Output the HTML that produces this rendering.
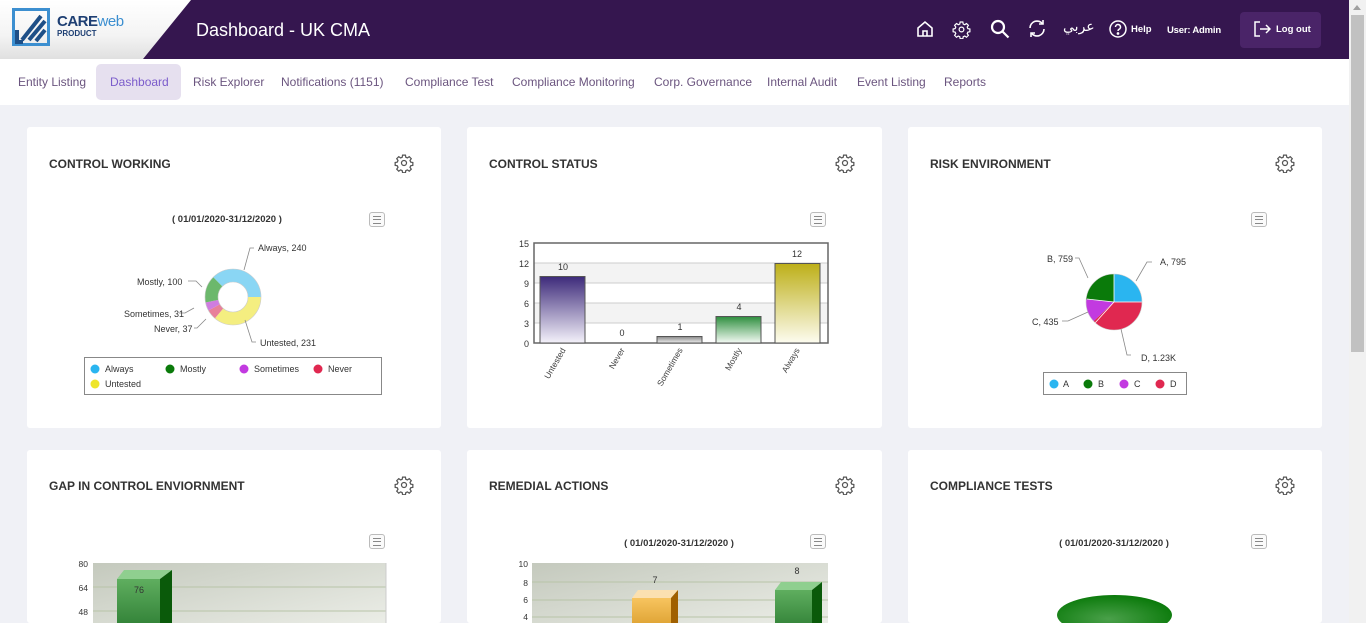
<!DOCTYPE html>
<html style="height:623px;overflow:hidden"><head><meta charset="utf-8">
<style>
*{margin:0;padding:0;box-sizing:border-box}
body{width:1366px;height:623px;overflow:hidden;background:#f0f1f6;font-family:"Liberation Sans","Noto Sans CJK SC",sans-serif;position:relative}
.a{position:absolute}
#hdr{left:0;top:0;width:1349px;height:59px;background:#35164f}
#logo{left:0;top:0;width:200px;height:59px;background:linear-gradient(180deg,#fff 0%,#f4f4f4 60%,#e0e0e0 100%);clip-path:polygon(0 0,191px 0,143px 59px,0 59px)}
#nav{left:0;top:59px;width:1349px;height:46px;background:#fff}
.nv{top:75px;font-size:12px;color:#6b557f}
.card{background:#fff;border-radius:3px}
.ct{font-size:12px;font-weight:bold;color:#333}
.gear{width:20px;height:20px;color:#555}
.menu{width:16px;height:15px;border:1px solid #bbb;border-radius:3px;background:#fafafa}
.menu:after{content:"";position:absolute;left:3px;top:3px;width:8px;height:6px;border-top:1.5px solid #888;border-bottom:1.5px solid #888}
.menu:before{content:"";position:absolute;left:3px;top:6px;width:8px;border-top:1.5px solid #888}
.dt{font-size:9.5px;font-weight:bold;color:#333}
#sb{left:1349px;top:0;width:17px;height:623px;background:#f1f1f1}
</style></head><body>
<svg width="0" height="0" style="position:absolute"><defs>
<symbol id="g" viewBox="0 0 24 24"><g fill="none" stroke="currentColor" stroke-width="1.5"><circle cx="12" cy="12" r="3"/><path d="M10.3 2.5h3.4l.5 2.6 1.9.8 2.2-1.5 2.4 2.4-1.5 2.2.8 1.9 2.6.5v3.4l-2.6.5-.8 1.9 1.5 2.2-2.4 2.4-2.2-1.5-1.9.8-.5 2.6h-3.4l-.5-2.6-1.9-.8-2.2 1.5-2.4-2.4 1.5-2.2-.8-1.9-2.6-.5v-3.4l2.6-.5.8-1.9-1.5-2.2 2.4-2.4 2.2 1.5 1.9-.8z"/></g></symbol>
<linearGradient id="pu" x1="0" y1="0" x2="0" y2="1"><stop offset="0" stop-color="#3d2a7a"/><stop offset="1" stop-color="#f4f2fa"/></linearGradient>
<linearGradient id="gr" x1="0" y1="0" x2="0" y2="1"><stop offset="0" stop-color="#2f8f3f"/><stop offset="1" stop-color="#f4faf4"/></linearGradient>
<linearGradient id="ye" x1="0" y1="0" x2="0" y2="1"><stop offset="0" stop-color="#bdaf18"/><stop offset="1" stop-color="#fdfcf0"/></linearGradient>
<linearGradient id="gy" x1="0" y1="0" x2="0" y2="1"><stop offset="0" stop-color="#888"/><stop offset="1" stop-color="#eee"/></linearGradient>
<linearGradient id="bg3" x1="0" y1="0" x2="1" y2="1"><stop offset="0" stop-color="#c4c9bd"/><stop offset="1" stop-color="#eef0ea"/></linearGradient>
<linearGradient id="g3" x1="0" y1="0" x2="0" y2="1"><stop offset="0" stop-color="#5fae5f"/><stop offset="1" stop-color="#2f7f35"/></linearGradient>
<linearGradient id="o3" x1="0" y1="0" x2="0" y2="1"><stop offset="0" stop-color="#f7c45f"/><stop offset="1" stop-color="#dca030"/></linearGradient>
<radialGradient id="el" cx=".45" cy=".6" r=".6"><stop offset="0" stop-color="#4aa04a"/><stop offset="1" stop-color="#0b7a0b"/></radialGradient>
</defs></svg>

<div id="hdr" class="a"></div>
<div id="logo" class="a"></div>
<svg class="a" style="left:12px;top:8px" width="38" height="38" viewBox="0 0 38 38"><rect x="1.5" y="1.5" width="35" height="35" fill="none" stroke="#3c8fd0" stroke-width="3"/><path d="M5 22v12h6" fill="none" stroke="#1e4f87" stroke-width="4"/><path d="M10 32L29 8M17 32L33 13M24 33L33 22" stroke="#1e4f87" stroke-width="4"/></svg>
<div class="a" style="left:57px;top:13px;font-size:15px;font-weight:bold;color:#1e3f73;letter-spacing:-.5px">CARE<span style="font-weight:normal;color:#3c8fd0">web</span></div>
<div class="a" style="left:57px;top:29px;font-size:8px;font-weight:bold;color:#1e3f73">PRODUCT</div>
<div class="a" style="left:196px;top:20px;font-size:18px;color:#fff">Dashboard - UK CMA</div>

<svg class="a" style="left:916px;top:20px" width="18" height="18" viewBox="0 0 18 18" fill="none" stroke="#fff" stroke-width="1.6"><path d="M2 8L9 2l7 6v8H2z"/><path d="M7 16v-5h4v5"/></svg>
<svg class="a" style="left:952px;top:20px;color:#fff" width="19" height="19"><use href="#g"/></svg>
<svg class="a" style="left:990px;top:19px" width="20" height="20" viewBox="0 0 20 20" fill="none" stroke="#fff" stroke-width="2.2"><circle cx="8" cy="8" r="6"/><path d="M12.5 12.5l6 6"/></svg>
<svg class="a" style="left:1028px;top:19px" width="18" height="19" viewBox="0 0 18 19" fill="none" stroke="#fff" stroke-width="1.6"><path d="M2 9a7 7 0 0 1 12.5-4.3M16 10a7 7 0 0 1-12.5 4.3"/><path d="M15 1v4h-4M3 18v-4h4"/></svg>
<div class="a" style="left:1063px;top:18px;font-size:14px;color:#fff">عربي</div>
<svg class="a" style="left:1109px;top:20px" width="18" height="18" viewBox="0 0 18 18" fill="none" stroke="#fff" stroke-width="1.5"><circle cx="9" cy="9" r="8"/><path d="M6.5 7a2.5 2.5 0 1 1 3.5 2.3c-.7.4-1 .8-1 1.7"/><circle cx="9" cy="13.5" r=".6" fill="#fff"/></svg>
<div class="a" style="left:1131px;top:24px;font-size:9.5px;font-weight:bold;color:#fff">Help</div>
<div class="a" style="left:1167px;top:25px;font-size:9.5px;font-weight:bold;color:#fff;letter-spacing:-.2px">User: Admin</div>
<div class="a" style="left:1240px;top:12px;width:81px;height:36px;background:#4a2468;border-radius:4px"></div>
<svg class="a" style="left:1253px;top:20px" width="18" height="18" viewBox="0 0 18 18" fill="none" stroke="#fff" stroke-width="1.5"><path d="M7 2H2v14h5M7 9h10M13 5l4 4-4 4"/></svg>
<div class="a" style="left:1276px;top:24px;font-size:9.5px;font-weight:bold;color:#fff">Log out</div>

<div id="nav" class="a"></div>
<div class="a" style="left:96px;top:64px;width:85px;height:36px;background:#e6e0ef;border-radius:5px"></div>
<div class="a nv" style="left:18px">Entity Listing</div>
<div class="a nv" style="left:110px;color:#7b5ccb">Dashboard</div>
<div class="a nv" style="left:193px">Risk Explorer</div>
<div class="a nv" style="left:281px">Notifications (1151)</div>
<div class="a nv" style="left:405px">Compliance Test</div>
<div class="a nv" style="left:512px">Compliance Monitoring</div>
<div class="a nv" style="left:654px">Corp. Governance</div>
<div class="a nv" style="left:767px">Internal Audit</div>
<div class="a nv" style="left:857px">Event Listing</div>
<div class="a nv" style="left:944px">Reports</div>

<div id="sb" class="a"><div class="a" style="left:2px;top:15px;width:13px;height:337px;background:#c1c1c1"></div><div class="a" style="left:4px;top:5px;border:4px solid transparent;border-bottom:5px solid #a0a0a0;border-top:0"></div></div>

<div class="a card" style="left:27px;top:127px;width:414px;height:301px"></div>
<div class="a card" style="left:467px;top:127px;width:415px;height:301px"></div>
<div class="a card" style="left:908px;top:127px;width:414px;height:301px"></div>
<div class="a card" style="left:27px;top:450px;width:414px;height:173px"></div>
<div class="a card" style="left:467px;top:450px;width:415px;height:173px"></div>
<div class="a card" style="left:908px;top:450px;width:414px;height:173px"></div>

<div class="a ct" style="left:49px;top:157px">CONTROL WORKING</div>
<div class="a ct" style="left:489px;top:157px">CONTROL STATUS</div>
<div class="a ct" style="left:930px;top:157px">RISK ENVIRONMENT</div>
<div class="a ct" style="left:49px;top:479px">GAP IN CONTROL ENVIORNMENT</div>
<div class="a ct" style="left:489px;top:479px">REMEDIAL ACTIONS</div>
<div class="a ct" style="left:930px;top:479px">COMPLIANCE TESTS</div>
<svg class="a gear" style="left:394px;top:153px"><use href="#g"/></svg>
<svg class="a gear" style="left:835px;top:153px"><use href="#g"/></svg>
<svg class="a gear" style="left:1275px;top:153px"><use href="#g"/></svg>
<svg class="a gear" style="left:394px;top:475px"><use href="#g"/></svg>
<svg class="a gear" style="left:835px;top:475px"><use href="#g"/></svg>
<svg class="a gear" style="left:1275px;top:475px"><use href="#g"/></svg>
<div class="a menu" style="left:369px;top:212px"></div>
<div class="a menu" style="left:810px;top:212px"></div>
<div class="a menu" style="left:1251px;top:212px"></div>
<div class="a menu" style="left:369px;top:534px"></div>
<div class="a menu" style="left:810px;top:534px"></div>
<div class="a menu" style="left:1251px;top:534px"></div>

<div class="a dt" style="left:172px;top:214px">( 01/01/2020-31/12/2020 )</div>
<svg class="a" style="left:0;top:0" width="450" height="430">
<g fill="none" stroke-width="13">
<circle cx="233" cy="297" r="21.5" stroke="#f4ee80" stroke-dasharray="48.83 135.09" stroke-dashoffset="0"/>
<circle cx="233" cy="297" r="21.5" stroke="#e8809a" stroke-dasharray="7.82 135.09" stroke-dashoffset="-48.83"/>
<circle cx="233" cy="297" r="21.5" stroke="#cf7de0" stroke-dasharray="6.55 135.09" stroke-dashoffset="-56.65"/>
<circle cx="233" cy="297" r="21.5" stroke="#6cb86c" stroke-dasharray="21.14 135.09" stroke-dashoffset="-63.2"/>
<circle cx="233" cy="297" r="21.5" stroke="#8ad6f4" stroke-dasharray="50.74 135.09" stroke-dashoffset="-84.34"/>
</g>
<circle cx="233" cy="297" r="28" fill="none" stroke="#ccc" stroke-width=".6"/>
<circle cx="233" cy="297" r="15" fill="none" stroke="#ccc" stroke-width=".6"/>
<g stroke="#888" fill="none" stroke-width=".8"><path d="M244 270l6-22h4M188 281h8l6 6M179 313h6l9-5M194 328h3l9-9M245 320l7 22h4"/></g>
<g font-size="9" fill="#333">
<text x="258" y="251">Always, 240</text>
<text x="137" y="285">Mostly, 100</text>
<text x="124" y="317">Sometimes, 31</text>
<text x="154" y="332">Never, 37</text>
<text x="260" y="346">Untested, 231</text></g>
<rect x="84.5" y="357.5" width="297" height="37" fill="#fff" stroke="#888"/>
<g font-size="9" fill="#333">
<circle cx="95" cy="369" r="4.5" fill="#2ab5f0"/><text x="105" y="372">Always</text>
<circle cx="170" cy="369" r="4.5" fill="#0a7a0a"/><text x="180" y="372">Mostly</text>
<circle cx="244" cy="369" r="4.5" fill="#c23ae0"/><text x="254" y="372">Sometimes</text>
<circle cx="318" cy="369" r="4.5" fill="#e02850"/><text x="328" y="372">Never</text>
<circle cx="95" cy="384" r="4.5" fill="#eee52a"/><text x="105" y="387">Untested</text>
</g>
</svg>

<svg class="a" style="left:467px;top:127px" width="415" height="301">
<g transform="translate(-467 -127)">
<rect x="534" y="243" width="294" height="100" fill="#fff"/>
<rect x="534" y="263" width="294" height="20" fill="#f3f3f3"/><rect x="534" y="303" width="294" height="20" fill="#f3f3f3"/>
<g stroke="#ccc"><path d="M534 263h294M534 283h294M534 303h294M534 323h294"/></g>
<rect x="534" y="243" width="294" height="100" fill="none" stroke="#666" stroke-width="1.5"/>
<g font-size="9" fill="#333" text-anchor="end"><text x="529" y="247">15</text><text x="529" y="267">12</text><text x="529" y="287">9</text><text x="529" y="307">6</text><text x="529" y="327">3</text><text x="529" y="347">0</text></g>
<g stroke="#555"><rect x="540" y="276.5" width="45" height="66.5" fill="url(#pu)"/><rect x="657" y="336.5" width="45" height="6.5" fill="url(#gy)"/><rect x="716" y="316.5" width="45" height="26.5" fill="url(#gr)"/><rect x="775" y="263.5" width="45" height="79.5" fill="url(#ye)"/></g>
<g font-size="9" fill="#333" text-anchor="middle"><text x="563" y="270">10</text><text x="622" y="336">0</text><text x="680" y="330">1</text><text x="739" y="310">4</text><text x="797" y="257">12</text></g>
<g font-size="8.5" fill="#444" text-anchor="end">
<text transform="translate(566 350) rotate(-60)">Untested</text>
<text transform="translate(625 350) rotate(-60)">Never</text>
<text transform="translate(683 350) rotate(-60)">Sometimes</text>
<text transform="translate(742 350) rotate(-60)">Mostly</text>
<text transform="translate(800 350) rotate(-60)">Always</text>
</g></g>
</svg>

<svg class="a" style="left:908px;top:127px" width="414" height="301">
<g transform="translate(-908 -127)">
<g transform="rotate(-90 1114 302)" fill="none" stroke-width="28">
<circle cx="1114" cy="302" r="14" stroke="#2ab5f0" stroke-dasharray="21.72 87.96"/>
<circle cx="1114" cy="302" r="14" stroke="#e02850" stroke-dasharray="33.61 87.96" stroke-dashoffset="-21.72"/>
<circle cx="1114" cy="302" r="14" stroke="#c23ae0" stroke-dasharray="11.89 87.96" stroke-dashoffset="-55.33"/>
<circle cx="1114" cy="302" r="14" stroke="#0a7a0a" stroke-dasharray="20.74 87.96" stroke-dashoffset="-67.22"/>
</g>
<g stroke="#fff" stroke-width=".8"><path d="M1114 302V274M1114 302h28M1114 302l-27-3M1114 302l-19 21"/></g>
<circle cx="1114" cy="302" r="28" fill="none" stroke="#ccc" stroke-width=".6"/>
<g stroke="#888" fill="none" stroke-width=".8"><path d="M1075 258h4l9 20M1152 262h-5l-11 19M1062 321h6l20-9M1121 329l6 26h4"/></g>
<g font-size="9" fill="#333"><text x="1047" y="262">B, 759</text><text x="1160" y="265">A, 795</text><text x="1032" y="325">C, 435</text><text x="1141" y="361">D, 1.23K</text></g>
<rect x="1043.5" y="372.5" width="143" height="22" fill="#fff" stroke="#888"/>
<g font-size="9" fill="#333">
<circle cx="1054" cy="384" r="4.5" fill="#2ab5f0"/><text x="1063" y="387">A</text>
<circle cx="1088" cy="384" r="4.5" fill="#0a7a0a"/><text x="1098" y="387">B</text>
<circle cx="1124" cy="384" r="4.5" fill="#c23ae0"/><text x="1134" y="387">C</text>
<circle cx="1160" cy="384" r="4.5" fill="#e02850"/><text x="1170" y="387">D</text>
</g></g>
</svg>

<svg class="a" style="left:0;top:450px" width="1349" height="173">
<g transform="translate(0 -450)">
<rect x="93" y="563" width="293" height="70" fill="url(#bg3)"/>
<g stroke="#b8c4a8"><path d="M93 587h293M93 611h293"/></g>
<path d="M386 563v70" stroke="#ccc"/>
<g font-size="8.5" fill="#333" text-anchor="end"><text x="88" y="567">80</text><text x="88" y="591">64</text><text x="88" y="615">48</text></g>
<rect x="117" y="579" width="43" height="50" fill="url(#g3)"/>
<path d="M117 579l7-9h48l-12 9z" fill="#8fcf8f"/><path d="M160 579l12-9v60l-12 3z" fill="#0a5a0a"/>
<text x="139" y="593" font-size="9" fill="#333" text-anchor="middle">76</text>

<text x="679" y="546" font-size="9.5" font-weight="bold" fill="#333" text-anchor="middle">( 01/01/2020-31/12/2020 )</text>
<rect x="532" y="563" width="296" height="70" fill="url(#bg3)"/>
<g stroke="#b8c4a8"><path d="M532 582h296M532 600h296M532 617h296"/></g>
<g font-size="8.5" fill="#333" text-anchor="end"><text x="528" y="567">10</text><text x="528" y="586">8</text><text x="528" y="603">6</text><text x="528" y="620">4</text></g>
<rect x="632" y="598" width="39" height="30" fill="url(#o3)"/>
<path d="M632 598l6-8h40l-7 8z" fill="#fbe0b0"/><path d="M671 598l7-8v40l-7 3z" fill="#a06000"/>
<text x="655" y="583" font-size="9" fill="#333" text-anchor="middle">7</text>
<rect x="775" y="590" width="37" height="40" fill="url(#g3)"/>
<path d="M775 590l6-8h41l-10 8z" fill="#8fcf8f"/><path d="M812 590l10-8v48l-10 3z" fill="#0a5a0a"/>
<text x="797" y="574" font-size="9" fill="#333" text-anchor="middle">8</text>

<text x="1114" y="546" font-size="9.5" font-weight="bold" fill="#333" text-anchor="middle">( 01/01/2020-31/12/2020 )</text>
<ellipse cx="1114.5" cy="615" rx="57.5" ry="20" fill="url(#el)"/>
</g>
</svg>
</body></html>
